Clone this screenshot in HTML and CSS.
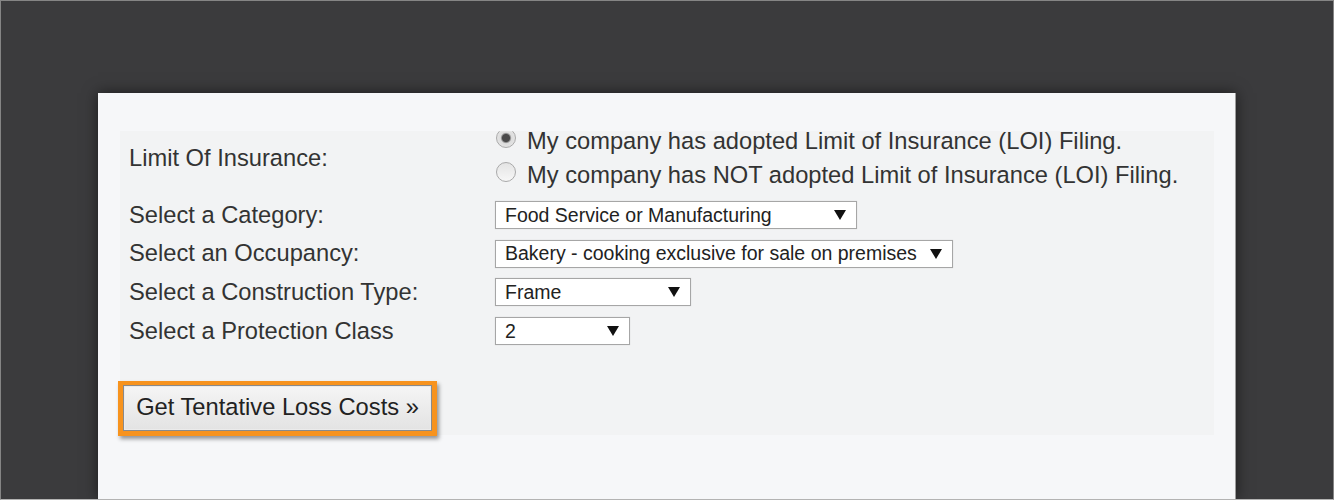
FILE: index.html
```html
<!DOCTYPE html>
<html lang="en">
<head>
<meta charset="utf-8">
<title>Tentative Loss Costs</title>
<link rel="stylesheet" href="styles.css">
</head>
<body>
<div class="card">
  <div class="panel">
    <div class="form">
      <div class="row row-loi">
        <div class="label">Limit Of Insurance:</div>
        <div class="radios">
          <div class="radio-line"><span class="radio checked first"></span><span>My company has adopted Limit of Insurance (LOI) Filing.</span></div>
          <div class="radio-line"><span class="radio"></span><span>My company has NOT adopted Limit of Insurance (LOI) Filing.</span></div>
        </div>
      </div>
      <div class="row">
        <div class="label">Select a Category:</div>
        <div class="select w-cat"><span>Food Service or Manufacturing</span><svg class="arrow" viewBox="0 0 12 10" width="12" height="10"><polygon points="0,0 12,0 6,10"/></svg></div>
      </div>
      <div class="row">
        <div class="label">Select an Occupancy:</div>
        <div class="select w-occ"><span>Bakery - cooking exclusive for sale on premises</span><svg class="arrow" viewBox="0 0 12 10" width="12" height="10"><polygon points="0,0 12,0 6,10"/></svg></div>
      </div>
      <div class="row">
        <div class="label">Select a Construction Type:</div>
        <div class="select w-con"><span>Frame</span><svg class="arrow" viewBox="0 0 12 10" width="12" height="10"><polygon points="0,0 12,0 6,10"/></svg></div>
      </div>
      <div class="row">
        <div class="label">Select a Protection Class</div>
        <div class="select w-pro"><span>2</span><svg class="arrow" viewBox="0 0 12 10" width="12" height="10"><polygon points="0,0 12,0 6,10"/></svg></div>
      </div>
    </div>
    <div class="actions">
      <div class="highlight"><button class="btn" type="button">Get Tentative Loss Costs »</button></div>
    </div>
  </div>
</div>
</body>
</html>
```

FILE: styles.css
```css
html, body {
  margin: 0;
  height: 500px;
}
body {
  box-sizing: border-box;
  background: #3b3b3d;
  border: 1px solid #858585;
  border-bottom-color: #b3b3b3;
  padding: 92px 0 0 97px;
  font-family: "Liberation Sans", Arial, sans-serif;
  overflow: hidden;
}
.card {
  width: 1138px;
  height: 100%;
  box-sizing: border-box;
  background: #f6f7f9;
  border-right: 1px solid #9c9c9c;
  box-shadow: 0 0 14px rgba(0, 0, 0, 0.55);
  padding: 38px 0 0 22px;
}
.panel {
  display: flow-root;
  width: 1094px;
  height: 304px;
  background: #f2f3f4;
}
.form {
  margin-top: -6.3px;
  padding-left: 9px;
}
.row {
  display: flex;
  align-items: center;
  height: 38.6px;
}
.row-loi {
  height: auto;
  padding-bottom: 3.3px;
}
.label {
  width: 366px;
  flex: none;
  font-size: 23.7px;
  color: #333;
  white-space: nowrap;
}
.radio-line {
  display: flex;
  align-items: center;
  gap: 11px;
  height: 34px;
  font-size: 23.7px;
  color: #333;
  white-space: nowrap;
}
.radio {
  flex: none;
  width: 20px;
  height: 20px;
  box-sizing: border-box;
  margin: 0 0 7px 1px;
  border-radius: 50%;
  border: 1px solid #a9a9a9;
  background: linear-gradient(#e4e4e4, #f7f7f7);
}
.radio.checked {
  background: radial-gradient(circle, #4a4a4a 0, #4a4a4a 3.6px, #9a9a9a 4.6px, #dcdcdc 5.6px, #ececec 100%);
}
.radio.first {
  clip-path: inset(3px 0 0 0);
}
.select {
  display: flex;
  align-items: center;
  justify-content: space-between;
  height: 28px;
  box-sizing: border-box;
  border: 1px solid #a6a6a6;
  background: #fff;
  box-shadow: 0 0 1px rgba(0, 0, 0, 0.15);
  padding: 0 10.5px 0 9px;
  font-size: 19.5px;
  color: #222;
  white-space: nowrap;
}
.arrow {
  flex: none;
  fill: #111;
}
.w-cat { width: 362px; }
.w-occ { width: 458px; }
.w-con { width: 196px; }
.w-pro { width: 135px; }
.actions {
  margin-top: 30.6px;
  margin-left: -2px;
}
.highlight {
  display: inline-flex;
  border: 5px solid #f7931e;
  border-top-width: 4px;
  box-shadow: 2px 3px 4px rgba(0, 0, 0, 0.4);
}
.btn {
  height: 46px;
  width: 309px;
  box-sizing: border-box;
  margin: 0;
  padding: 0 8px;
  border: 1px solid #8a8a8a;
  background: linear-gradient(#f5f5f5, #e3e3e3);
  box-shadow: inset 0 0 0 1px #ebebeb;
  font-family: "Liberation Sans", Arial, sans-serif;
  font-size: 23.7px;
  color: #222;
  white-space: nowrap;
}
```
